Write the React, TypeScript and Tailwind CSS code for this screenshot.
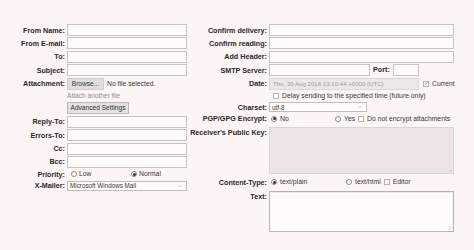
import { ChevronDown } from 'lucide-react'
import type { ReactNode } from 'react'

function Label({ children, w, top = false }: { children: ReactNode; w: string; top?: boolean }) {
  return (
    <div
      className={`${w} shrink-0 pr-[2px] text-right font-bold text-[7.2px] text-[#2b2727] whitespace-nowrap ${top ? 'self-start pt-[1px] leading-[9px]' : 'leading-[9px]'}`}
    >
      {children}
    </div>
  )
}

function Field({ w }: { w: string }) {
  return <div className={`${w} h-[12px] border border-[#cbc3c3] bg-[#fffbfb]`} />
}

function Select({ w, value }: { w: string; value: string }) {
  return (
    <div className={`${w} h-[10px] flex items-center justify-between border border-[#c2bbbb] bg-[#fffbfb] pl-[2px] pr-[3px] text-[6.3px] text-[#3a3535] whitespace-nowrap`}>
      <span>{value}</span>
      <ChevronDown size={6} strokeWidth={1.5} className="text-[#8a8484]" />
    </div>
  )
}

function Radio({ checked = false }: { checked?: boolean }) {
  return (
    <span className="w-[6px] h-[6px] shrink-0 rounded-full border border-[#8d8787] bg-white flex items-center justify-center">
      {checked && <span className="w-[3px] h-[3px] rounded-full bg-[#3b3636]" />}
    </span>
  )
}

function Check({ checked = false }: { checked?: boolean }) {
  return (
    <span className="w-[6px] h-[6px] shrink-0 border border-[#b8b1b1] bg-white flex items-center justify-center">
      {checked && (
        <svg viewBox="0 0 6 6" className="w-[5px] h-[5px]">
          <path d="M1 3 L2.5 4.5 L5 1.2" fill="none" stroke="#4a4545" strokeWidth="0.9" />
        </svg>
      )}
    </span>
  )
}

function Grip() {
  return (
    <svg viewBox="0 0 6 6" className="absolute right-[1px] bottom-[1px] w-[4px] h-[4px]">
      <path d="M6 1 L1 6 M6 3.5 L3.5 6" stroke="#b5aeae" strokeWidth="0.7" />
    </svg>
  )
}

const txt = 'text-[6.8px] text-[#3a3535] leading-[8px] whitespace-nowrap'

export default function App() {
  const L = 'w-[49px]'
  const R = 'w-[79px]'
  return (
    <div className="w-[474px] h-[250px] bg-[#fdf5f5] font-['Liberation_Sans',Arial,sans-serif] flex pt-[24px] pl-[18px]">
      {/* left column */}
      <div className="flex flex-col gap-y-[1.4px] w-[172px]">
        <div className="flex items-center h-[12px]"><Label w={L}>From Name:</Label><Field w="w-[120px]" /></div>
        <div className="flex items-center h-[12px]"><Label w={L}>From E-mail:</Label><Field w="w-[120px]" /></div>
        <div className="flex items-center h-[12px]"><Label w={L}>To:</Label><Field w="w-[120px]" /></div>
        <div className="flex items-center h-[12px]"><Label w={L}>Subject:</Label><Field w="w-[120px]" /></div>
        <div className="flex items-center h-[12px]">
          <Label w={L}>Attachment:</Label>
          <div className="w-[37px] h-[12px] flex items-center justify-center border border-[#d2cccc] bg-[#e3dede] text-[6.6px] text-[#3a3535]">Browse...</div>
          <span className={`${txt} ml-[3px]`}>No file selected.</span>
        </div>
        <div className="flex items-center h-[10px]">
          <div className={`${L} shrink-0`} />
          <span className="text-[6.6px] text-[#8f8a8a] whitespace-nowrap">Attach another file</span>
        </div>
        <div className="flex items-center h-[12px]">
          <div className={`${L} shrink-0`} />
          <div className="w-[62px] h-[12px] flex items-center justify-center border border-[#bdb6b6] bg-[#e6e1e1] text-[6.6px] text-[#2f2b2b] whitespace-nowrap">Advanced Settings</div>
        </div>
        <div className="flex items-center h-[12px]"><Label w={L}>Reply-To:</Label><Field w="w-[120px]" /></div>
        <div className="flex items-center h-[12px]"><Label w={L}>Errors-To:</Label><Field w="w-[120px]" /></div>
        <div className="flex items-center h-[12px]"><Label w={L}>Cc:</Label><Field w="w-[120px]" /></div>
        <div className="flex items-center h-[12px]"><Label w={L}>Bcc:</Label><Field w="w-[120px]" /></div>
        <div className="flex items-center h-[10px]">
          <Label w={L}>Priority:</Label>
          <div className="flex items-center w-[64px] pl-[4px] gap-[2px]"><Radio /><span className={txt}>Low</span></div>
          <div className="flex items-center gap-[2px]"><Radio checked /><span className={txt}>Normal</span></div>
        </div>
        <div className="flex items-center h-[10px]"><Label w={L}>X-Mailer:</Label><Select w="w-[120px]" value="Microsoft Windows Mail" /></div>
      </div>

      {/* right column */}
      <div className="flex flex-col gap-y-[1.4px]">
        <div className="flex items-center h-[12px]"><Label w={R}>Confirm delivery:</Label><Field w="w-[185px]" /></div>
        <div className="flex items-center h-[12px]"><Label w={R}>Confirm reading:</Label><Field w="w-[185px]" /></div>
        <div className="flex items-center h-[12px]"><Label w={R}>Add Header:</Label><Field w="w-[185px]" /></div>
        <div className="flex items-center h-[12px]">
          <Label w={R}>SMTP Server:</Label>
          <Field w="w-[101px]" />
          <span className="ml-[3px] w-[20px] font-bold text-[7.2px] text-[#2b2727]">Port:</span>
          <Field w="w-[26px]" />
        </div>
        <div className="flex items-center h-[12px]">
          <Label w={R}>Date:</Label>
          <div className="w-[150px] h-[12px] flex items-center border border-[#ddd5d5] bg-[#eee7e7] pl-[3px] text-[6.1px] text-[#a19b9b] whitespace-nowrap overflow-hidden">Thu, 30 Aug 2018 13:10:44 +0000 (UTC)</div>
          <div className="flex items-center gap-[3px] ml-[4px]"><Check checked /><span className={txt}>Current</span></div>
        </div>
        <div className="flex items-center h-[10px]">
          <div className={`${R} shrink-0`} />
          <div className="flex items-center gap-[3px] pl-[4px]"><Check /><span className={txt}>Delay sending to the specified time (future only)</span></div>
        </div>
        <div className="flex items-center h-[10px]"><Label w={R}>Charset:</Label><Select w="w-[98px]" value="utf-8" /></div>
        <div className="flex items-center h-[10px]">
          <Label w={R}>PGP/GPG Encrypt:</Label>
          <div className="flex items-center w-[66px] pl-[2px] gap-[3px]"><Radio checked /><span className={txt}>No</span></div>
          <div className="flex items-center gap-[3px]"><Radio /><span className={txt}>Yes</span><Check /><span className={txt}>Do not encrypt attachments</span></div>
        </div>
        <div className="flex mt-[1.6px] h-[47px]">
          <Label w={R} top>Receiver's Public Key:</Label>
          <div className="relative w-[185px] h-[47px] border border-[#ddd5d5] bg-[#ede5e5]"><Grip /></div>
        </div>
        <div className="flex items-center h-[14px]">
          <Label w={R}>Content-Type:</Label>
          <div className="flex items-center w-[77px] pl-[2px] gap-[3px]"><Radio checked /><span className={txt}>text/plain</span></div>
          <div className="flex items-center gap-[3px]"><Radio /><span className={txt}>text/html</span><Check /><span className={txt}>Editor</span></div>
        </div>
        <div className="flex h-[41px]">
          <Label w={R} top>Text:</Label>
          <div className="relative w-[185px] h-[41px] border border-[#b9b2b2] bg-[#fffbfb] shadow-[inset_0_1px_1px_rgba(0,0,0,0.08)]"><Grip /></div>
        </div>
      </div>
    </div>
  )
}
